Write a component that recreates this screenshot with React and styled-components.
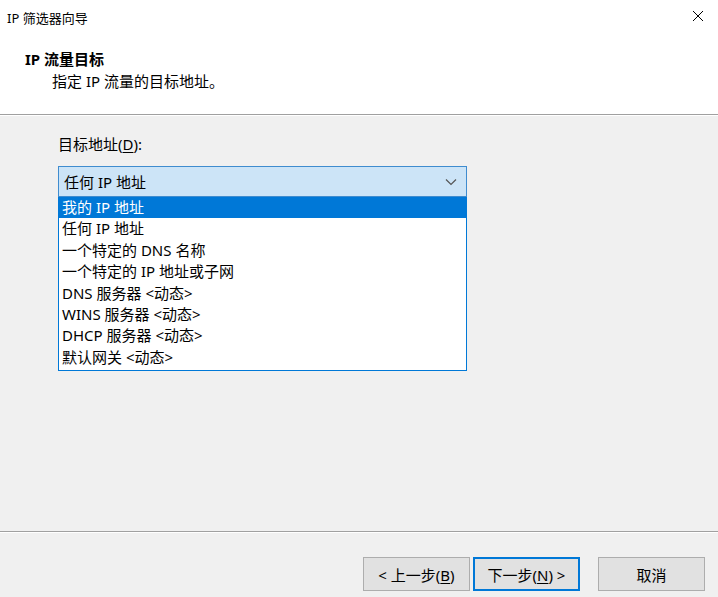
import React, { useState } from 'react';
import styled, { createGlobalStyle } from 'styled-components';

const Global = createGlobalStyle`
    html, body {
        margin: 0;
        padding: 0;
        background: #f0f0f0;
    }
    * {
        box-sizing: border-box;
    }
`;

const options = [
    '我的 IP 地址',
    '任何 IP 地址',
    '一个特定的 DNS 名称',
    '一个特定的 IP 地址或子网',
    'DNS 服务器 <动态>',
    'WINS 服务器 <动态>',
    'DHCP 服务器 <动态>',
    '默认网关 <动态>',
];

function App() {
    const [value] = useState('任何 IP 地址');
    const [hover] = useState(0);

    return (
        <React.Fragment>
            <Global />
            <Window>
                <Top>
                    <TitleBar>
                        <Title>IP 筛选器向导</Title>
                        <Close>
                            <svg width="12" height="12" viewBox="0 0 12 12">
                                <path d="M1 1 L11 11 M11 1 L1 11" stroke="#000" strokeWidth="1" />
                            </svg>
                        </Close>
                    </TitleBar>
                    <Header>
                        <HeadTitle>IP 流量目标</HeadTitle>
                        <HeadSub>指定 IP 流量的目标地址。</HeadSub>
                    </Header>
                </Top>
                <Body>
                    <Label>目标地址(<u>D</u>):</Label>
                    <ComboWrap>
                        <Combo>
                            <span>{value}</span>
                            <svg width="12" height="8" viewBox="0 0 12 8">
                                <path d="M1 1.5 L6 6.5 L11 1.5" fill="none" stroke="#555" strokeWidth="1.2" />
                            </svg>
                        </Combo>
                        <List>
                            {options.map((opt, i) =>
                                <Item key={i} active={i === hover}>{opt}</Item>
                            )}
                        </List>
                    </ComboWrap>
                </Body>
                <Footer>
                    <Button>&lt; 上一步(<u>B</u>)</Button>
                    <Button primary>下一步(<u>N</u>) &gt;</Button>
                    <Button gap>取消</Button>
                </Footer>
            </Window>
        </React.Fragment>
    );
}

export default App;

const Window = styled.div`
    width: 718px;
    height: 597px;
    display: flex;
    flex-direction: column;
    background: #f0f0f0;
    font-family: "Noto Sans", "Noto Sans CJK SC", sans-serif;
    font-size: 15px;
    color: #000;
`;

const Top = styled.div`
    background: #fff;
    height: 115px;
    border-bottom: 1px solid #a0a0a0;
    box-shadow: 0 1px 0 #fff;
`;

const TitleBar = styled.div`
    height: 34px;
    display: flex;
    align-items: center;
    justify-content: space-between;
    padding: 0 10px 0 7px;
`;

const Title = styled.div`
    font-size: 13px;
`;

const Close = styled.div`
    width: 20px;
    display: flex;
    justify-content: center;
    margin-top: -2px;
`;

const Header = styled.div`
    padding: 15px 0 0 25px;
`;

const HeadTitle = styled.div`
    font-weight: bold;
    line-height: 21px;
`;

const HeadSub = styled.div`
    padding-left: 27px;
    line-height: 22px;
`;

const Body = styled.div`
    flex: 1;
    padding: 19px 0 0 58px;
`;

const Label = styled.div`
    line-height: 20px;
    margin-bottom: 12px;
    u {
        text-decoration: underline;
        text-underline-offset: 2px;
    }
`;

const ComboWrap = styled.div`
    width: 409px;
`;

const Combo = styled.div`
    height: 31px;
    background: #cce4f7;
    border: 1px solid #3f8ccf;
    display: flex;
    align-items: center;
    justify-content: space-between;
    padding: 0 9px 0 5px;
`;

const List = styled.div`
    border: 1px solid #0078d7;
    border-top: none;
    background: #fff;
    padding-bottom: 2px;
`;

const Item = styled.div`
    height: 21.4px;
    line-height: 21px;
    padding-left: 3px;
    background: ${p => p.active ? '#0078d7' : '#fff'};
    color: ${p => p.active ? '#fff' : '#000'};
    white-space: pre;
`;

const Footer = styled.div`
    height: 66px;
    border-top: 1px solid #a0a0a0;
    box-shadow: inset 0 1px 0 #fff;
    display: flex;
    align-items: flex-start;
    padding: 25px 0 0 363px;
`;

const Button = styled.button`
    width: 107px;
    height: 34px;
    margin-left: ${p => p.gap ? '18px' : p.primary ? '3px' : '0'};
    background: #e1e1e1;
    border: ${p => p.primary ? '2px solid #0078d7' : '1px solid #adadad'};
    font-family: inherit;
    font-size: 15px;
    color: #000;
    padding: 0;
    u {
        text-underline-offset: 2px;
    }
`;
